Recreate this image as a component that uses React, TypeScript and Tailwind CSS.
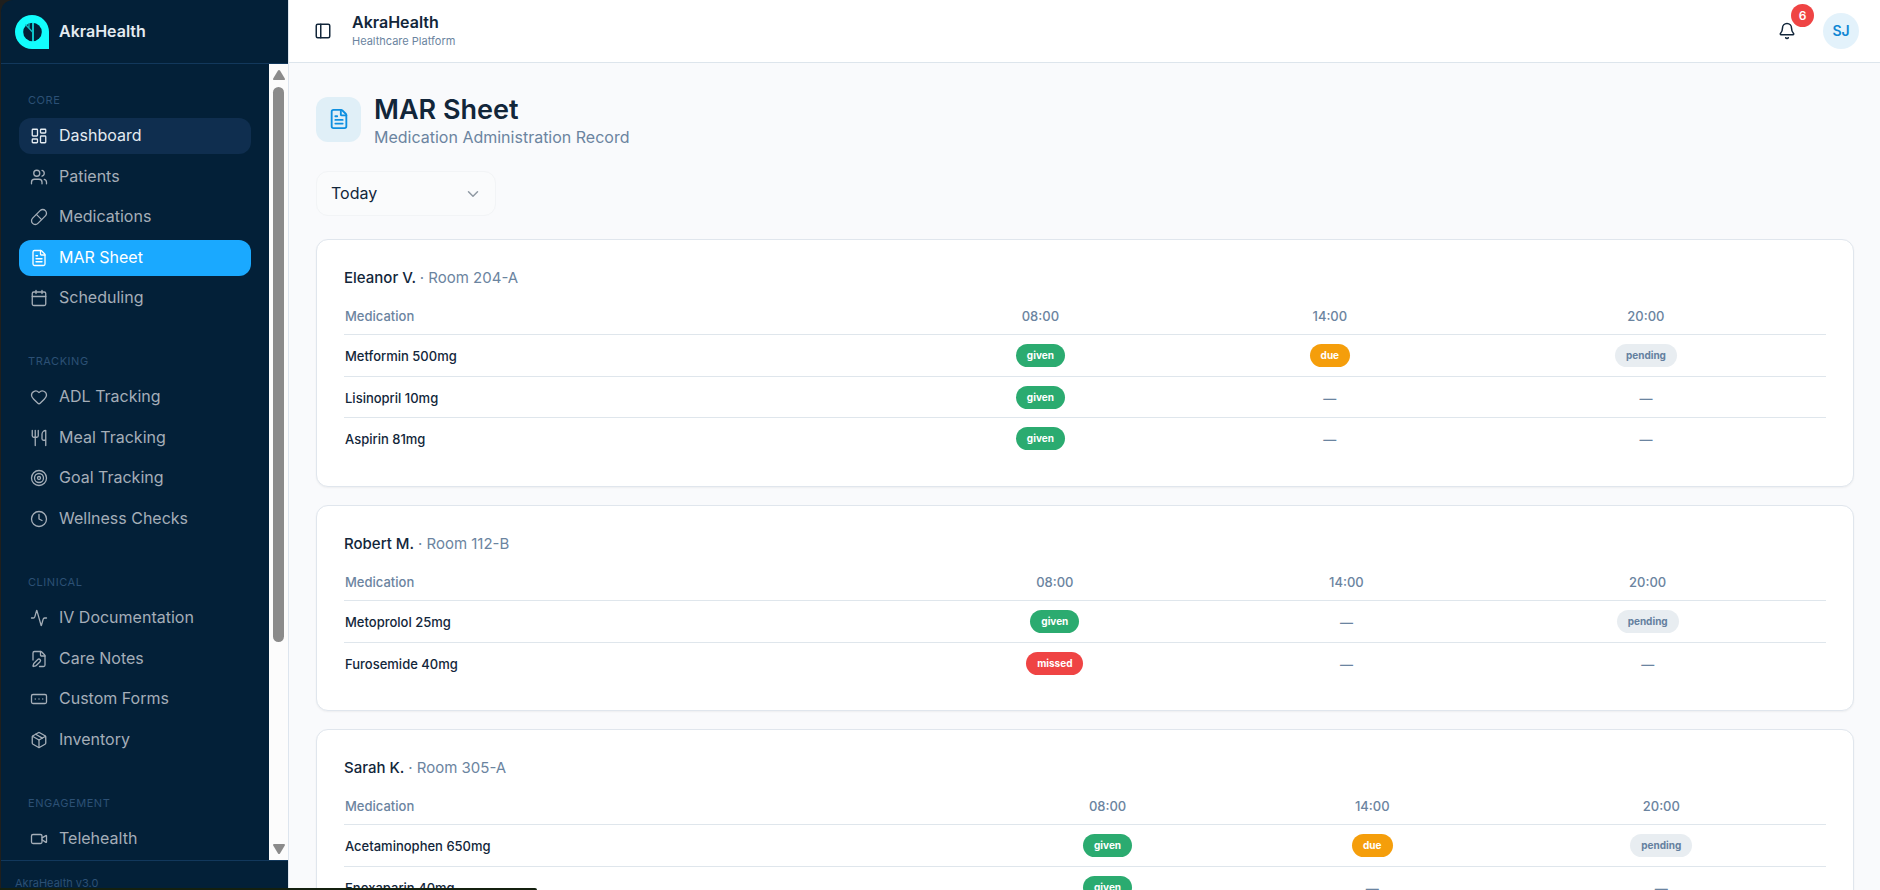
import React, { useState } from 'react';
import {
  Activity, Bell, Calendar, ChevronDown, Clock, FilePen, FileText, Heart, LayoutDashboard,
  LucideIcon, Package, PanelLeft, Pill, RectangleEllipsis, Target, Users, Utensils, Video,
} from 'lucide-react';
import { clsx } from 'clsx';

// ── data ──────────────────────────────────────────────────────────────────────
type NavItem = { label: string; icon: LucideIcon };
type Status = 'given' | 'due' | 'pending' | 'missed';

const NAV: { title: string; items: NavItem[] }[] = [
  {
    title: 'Core',
    items: [
      { label: 'Dashboard', icon: LayoutDashboard },
      { label: 'Patients', icon: Users },
      { label: 'Medications', icon: Pill },
      { label: 'MAR Sheet', icon: FileText },
      { label: 'Scheduling', icon: Calendar },
    ],
  },
  {
    title: 'Tracking',
    items: [
      { label: 'ADL Tracking', icon: Heart },
      { label: 'Meal Tracking', icon: Utensils },
      { label: 'Goal Tracking', icon: Target },
      { label: 'Wellness Checks', icon: Clock },
    ],
  },
  {
    title: 'Clinical',
    items: [
      { label: 'IV Documentation', icon: Activity },
      { label: 'Care Notes', icon: FilePen },
      { label: 'Custom Forms', icon: RectangleEllipsis },
      { label: 'Inventory', icon: Package },
    ],
  },
  {
    title: 'Engagement',
    items: [{ label: 'Telehealth', icon: Video }],
  },
];

const TIMES = ['08:00', '14:00', '20:00'];

const PATIENTS: { name: string; room: string; meds: { name: string; doses: (Status | null)[] }[] }[] = [
  {
    name: 'Eleanor V.',
    room: 'Room 204-A',
    meds: [
      { name: 'Metformin 500mg', doses: ['given', 'due', 'pending'] },
      { name: 'Lisinopril 10mg', doses: ['given', null, null] },
      { name: 'Aspirin 81mg', doses: ['given', null, null] },
    ],
  },
  {
    name: 'Robert M.',
    room: 'Room 112-B',
    meds: [
      { name: 'Metoprolol 25mg', doses: ['given', null, 'pending'] },
      { name: 'Furosemide 40mg', doses: ['missed', null, null] },
    ],
  },
  {
    name: 'Sarah K.',
    room: 'Room 305-A',
    meds: [
      { name: 'Acetaminophen 650mg', doses: ['given', 'due', 'pending'] },
      { name: 'Enoxaparin 40mg', doses: ['given', null, null] },
    ],
  },
];

const STATUS_STYLES: Record<Status, string> = {
  given: 'bg-[#2bab70] text-white',
  due: 'bg-[#f59e0b] text-white',
  missed: 'bg-[#ef4444] text-white',
  pending: 'bg-[#e8edf1] text-[#64809f]',
};

// ── Sidebar ───────────────────────────────────────────────────────────────────
function Logo() {
  return (
    <svg viewBox="0 0 34 34" className="w-[34px] h-[34px] shrink-0" aria-hidden="true">
      <path d="M17 0a17 17 0 0 0 0 34h17V17A17 17 0 0 0 17 0Z" fill="#12fdfd" />
      <circle cx="17.5" cy="17" r="9.3" fill="#032038" />
      <path d="M18 7v20" stroke="#12fdfd" strokeWidth="1.5" />
      <path d="M10.5 9.5 17.5 17M14 8v5.500" stroke="#12b9c4" strokeWidth="1.3" fill="none" />
    </svg>
  );
}

function ScrollRail() {
  return (
    <div className="w-[19px] shrink-0 bg-[#fcfcfc] flex flex-col items-center py-1.5" aria-hidden="true">
      <svg viewBox="0 0 12 10" className="w-3 h-2.5 shrink-0 fill-[#8b8b8b]">
        <path d="M6 0q.6 0 1 .6L11.800 8.400Q12.300 10 11 10H1Q-.3 10 .2 8.400L5 .6Q5.400 0 6 0Z" />
      </svg>
      <div className="flex-1 w-full flex flex-col items-center py-[7px]">
        <div className="w-[11px] h-[74%] rounded-full bg-[#8b8b8b]" />
      </div>
      <svg viewBox="0 0 12 10" className="w-3 h-2.5 shrink-0 fill-[#8b8b8b]">
        <path d="M6 10q.6 0 1-.6L11.800 1.600Q12.300 0 11 0H1Q-.3 0 .2 1.600L5 9.400Q5.400 10 6 10Z" />
      </svg>
    </div>
  );
}

function Sidebar() {
  return (
    <aside className="w-[289px] shrink-0 h-full bg-[#1f1f1d] border-r border-[#dde5ee] pl-px">
      <div className="h-full bg-[#032038] rounded-tl-xl flex flex-col">
        <div className="h-16 shrink-0 border-b border-[#12385c] px-3.5 flex items-center gap-2.5">
          <Logo />
          <span className="text-[#e4ebf1] text-base font-semibold pb-0.5">AkraHealth</span>
        </div>

        <div className="flex-1 min-h-0 flex">
          <nav className="flex-1 min-w-0 overflow-hidden px-[18px] pt-[18px]">
            {NAV.map((group) => (
              <section key={group.title} className="mb-[27px]">
                <h2 className="h-9 px-[9px] flex items-center text-[#2c5075] text-[11px] uppercase tracking-wider">
                  {group.title}
                </h2>
                <ul>
                  {group.items.map(({ label, icon: Icon }) => (
                    <li key={label} className="odd:mb-[5px] even:mb-1 last:mb-0">
                      <a
                        href="#"
                        className={clsx(
                          'h-9 px-[11px] rounded-xl flex items-center gap-[11px] text-base',
                          label === 'MAR Sheet' && 'bg-[#1aa9ff] text-white',
                          label === 'Dashboard' && 'bg-[#0f2e4f] text-[#e4ebf1]',
                          label !== 'MAR Sheet' && label !== 'Dashboard' && 'text-[#a5aeb8]',
                        )}
                      >
                        <Icon className="w-[18px] h-[18px] shrink-0" strokeWidth={1.75} />
                        <span className="pb-0.5">{label}</span>
                      </a>
                    </li>
                  ))}
                </ul>
              </section>
            ))}
          </nav>
          <ScrollRail />
        </div>

        <div className="h-[30px] shrink-0 overflow-hidden border-t border-[#12385c] px-3.5 pt-3.5 text-[#2c5075] text-[11px]">
          AkraHealth v3.0
        </div>
      </div>
    </aside>
  );
}

// ── Top bar ───────────────────────────────────────────────────────────────────
function TopBar() {
  return (
    <header className="h-[63px] shrink-0 bg-white border-b border-[#dde5ec] pl-[25px] pr-[21px] flex items-center justify-between">
      <div className="flex items-center gap-5">
        <button type="button" aria-label="Toggle sidebar">
          <PanelLeft className="w-[18px] h-[18px]" />
        </button>
        <div>
          <div className="text-base leading-5 font-semibold">AkraHealth</div>
          <div className="text-[#6b84a0] text-[11px] leading-[18px]">Healthcare Platform</div>
        </div>
      </div>
      <div className="flex items-center gap-[27px]">
        <button type="button" aria-label="Notifications" className="relative">
          <Bell className="w-[18px] h-[18px]" />
          <span className="absolute left-[13px] bottom-[13px] w-[23px] h-[23px] rounded-full bg-[#ef4444] text-white text-xs font-semibold flex items-center justify-center">
            6
          </span>
        </button>
        <button
          type="button"
          aria-label="Account"
          className="w-9 h-9 rounded-full bg-[#e3f2fb] text-[#0e86d4] text-sm font-semibold"
        >
          SJ
        </button>
      </div>
    </header>
  );
}

// ── MAR cards ─────────────────────────────────────────────────────────────────
function StatusBadge({ status }: { status: Status }) {
  return (
    <span className={clsx('inline-block h-[23px] px-[11px] rounded-full text-[10px] leading-[23px] font-bold align-top', STATUS_STYLES[status])}>
      {status}
    </span>
  );
}

function PatientCard({ patient }: { patient: (typeof PATIENTS)[number] }) {
  return (
    <section className="bg-white border border-[#e0e6ed] rounded-xl shadow-xs p-[27px]">
      <h2 className="text-[15px] leading-[22px] font-medium mb-[17px]">
        {patient.name} <span className="text-[#6b84a0] font-normal">· {patient.room}</span>
      </h2>
      <table className="w-full text-[13px] leading-5 font-medium">
        <thead>
          <tr className="border-b border-[#dfe6ec] text-[#6b84a0]">
            <th className="text-left font-medium pl-px pr-5 pb-2">Medication</th>
            {TIMES.map((time) => (
              <th key={time} className="font-medium px-[13px] pb-2">{time}</th>
            ))}
          </tr>
        </thead>
        <tbody>
          {patient.meds.map((med) => (
            <tr key={med.name} className="border-b border-[#dfe6ec] last:border-0 odd:[&>td]:pb-[9px] even:[&>td]:pb-2">
              <td className="pl-px pr-5 pt-[9px]">{med.name}</td>
              {med.doses.map((dose, i) => (
                <td key={TIMES[i]} className="text-center px-[13px] pt-[9px] text-[#6b84a0]">
                  {dose ? <StatusBadge status={dose} /> : '—'}
                </td>
              ))}
            </tr>
          ))}
        </tbody>
      </table>
    </section>
  );
}

export default function App() {
  const [range, setRange] = useState('Today');

  return (
    <div className="relative h-screen overflow-hidden flex bg-[#f9fafc] text-[#12263a] font-['Inter',sans-serif]">
      <Sidebar />
      <div className="flex-1 min-w-0 flex flex-col">
        <TopBar />
        <main className="flex-1 min-h-0 overflow-hidden pl-[27px] pr-[26px] pt-[29px]">
          <div className="flex items-center gap-[13px]">
            <div className="w-[45px] h-[45px] rounded-xl bg-[#e0eff7] text-[#0e8fe0] flex items-center justify-center">
              <FileText className="w-[22px] h-[22px]" />
            </div>
            <div>
              <h1 className="text-[27px] leading-9 font-semibold">MAR Sheet</h1>
              <p className="text-[#6b84a0] text-base leading-[18px]">Medication Administration Record</p>
            </div>
          </div>

          <div className="relative w-[180px] mt-[25px]">
            <select
              aria-label="Date range"
              value={range}
              onChange={(e) => setRange(e.target.value)}
              className="w-full h-[45px] appearance-none rounded-xl border border-[#f2f4f6] bg-[#fafbfc] pl-3.5 pr-10 pb-0.5 text-base"
            >
              <option>Today</option>
              <option>Yesterday</option>
              <option>This week</option>
            </select>
            <ChevronDown className="absolute right-3.5 top-3.5 w-[18px] h-[18px] text-[#8f99a3] pointer-events-none" />
          </div>

          <div className="mt-[23px] flex flex-col gap-[18px]">
            {PATIENTS.map((patient) => (
              <PatientCard key={patient.name} patient={patient} />
            ))}
          </div>
        </main>
      </div>

      {/* Top edge of the status bubble */}
      <div className="absolute left-0 bottom-0 w-[537px] h-0.5 rounded-tr-sm bg-[#14200f]" />
    </div>
  );
}
